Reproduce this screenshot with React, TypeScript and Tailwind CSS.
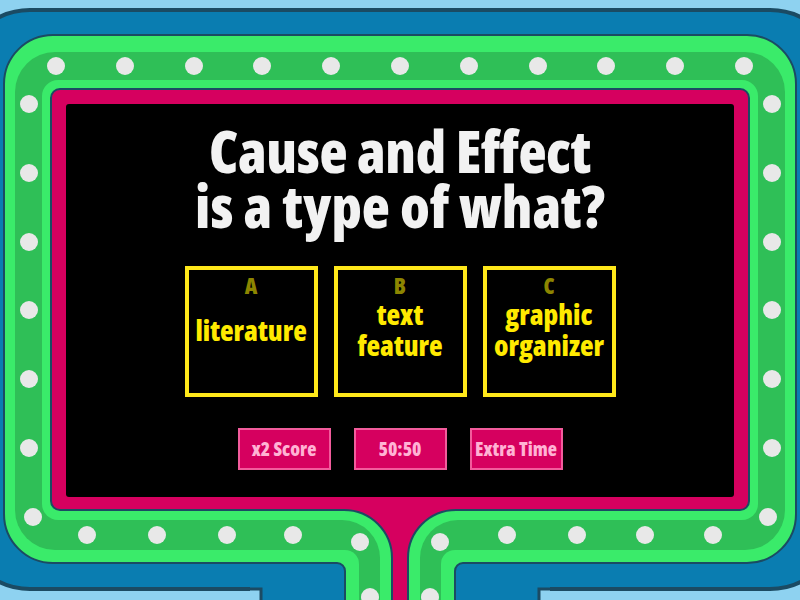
import React from 'react';

const OUTLINE = '#1b4b63';
const BLUE = '#0a7db1';
const LIGHT_GREEN = '#3aeb6a';
const DARK_GREEN = '#2fbf57';
const PINK = '#d6005f';
const DOT = '#e8e8e8';
const SKY = '#8ed2f0';

const answers = [
  { letter: 'A', lines: ['literature'] },
  { letter: 'B', lines: ['text', 'feature'] },
  { letter: 'C', lines: ['graphic', 'organizer'] },
];

const powerUps = ['x2 Score', '50:50', 'Extra Time'];

const Dot: React.FC<{ className?: string }> = ({ className = '' }) => (
  <div className={`h-[18px] w-[18px] shrink-0 rounded-full bg-[#e8e8e8] ${className}`} />
);

// the two podium legs and the pink stem under the screen
const LegJunction: React.FC = () => {
  const leg = (
    <>
      <path d="M -10 1 H 94 A 48 48 0 0 1 142 49 V 110 H -10 Z" fill={LIGHT_GREEN} stroke={OUTLINE} strokeWidth={2} />
      <path d="M -10 11 H 92 A 38 38 0 0 1 130 49 V 110 H -10 Z" fill={DARK_GREEN} />
      <path d="M -10 41 H 95 A 14 14 0 0 1 109 55 V 110 H -10 Z" fill={LIGHT_GREEN} />
      <path d="M -10 54 H 87 A 8 8 0 0 1 95 62 V 110 H -10 Z" fill={BLUE} stroke={OUTLINE} strokeWidth={2} />
      <rect x={-10} y={80} width={21} height={40} fill={SKY} stroke={OUTLINE} strokeWidth={3} />
      <circle cx={43} cy={26} r={9} fill={DOT} />
      <circle cx={110} cy={33} r={9} fill={DOT} />
      <circle cx={120} cy={88} r={9} fill={DOT} />
    </>
  );
  return (
    <svg className="absolute left-[250px] top-[509px]" width={300} height={91} viewBox="0 0 300 91">
      <rect x={0} y={-2} width={300} height={100} fill={PINK} />
      <g>{leg}</g>
      <g transform="translate(300 0) scale(-1 1)">{leg}</g>
    </svg>
  );
};

export default function App() {
  return (
    <div className="relative h-[600px] w-[800px] overflow-hidden bg-[#8ed2f0] pt-[8px] font-['Open_Sans','Liberation_Sans',sans-serif] [font-stretch:condensed]">
      <div className="-mx-[40px] h-[583px] rounded-[70px] border-4 border-[#1b4b63] bg-[#0a7db1] px-[39px] pt-[22px] pb-[23px]">
        <div className="h-full rounded-[50px] border-2 border-[#1b4b63] bg-[#3aeb6a] px-[10px] pt-[16px] pb-[12px]">
          <div className="grid h-full grid-cols-[27px_minmax(0,1fr)_27px] grid-rows-[28px_minmax(0,1fr)_30px] rounded-[40px] bg-[#2fbf57]">
            {/* top lights */}
            <div className="col-span-3 flex items-center justify-between px-[32px]">
              {Array.from({ length: 11 }).map((_, i) => (
                <Dot key={i} />
              ))}
            </div>

            {/* left lights */}
            <div className="flex flex-col items-center gap-[50.8px] pt-[15px]">
              {Array.from({ length: 7 }).map((_, i) => (
                <Dot key={i} className={i === 6 ? 'translate-x-[4px]' : ''} />
              ))}
            </div>

            {/* screen */}
            <div className="rounded-[16px] bg-[#3aeb6a] px-[8px] pt-[8px] pb-[9px]">
              <div className="h-full rounded-[10px] border-2 border-[#1b4b63] bg-[#d6005f] px-[14px] pt-[14px] pb-[12px]">
                <div className="flex h-full flex-col items-center rounded-[3px] bg-black">
                  <h1 className="mt-[19px] flex flex-col items-center text-center text-[58px] leading-[55px] font-extrabold text-[#f2f2f2]">
                    <span className="tracking-[-0.3px]">Cause and Effect</span>
                    <span>is a type of what?</span>
                  </h1>

                  <div className="mt-[33px] flex gap-[16px]">
                    {answers.map((a) => (
                      <div key={a.letter} className="flex h-[131px] w-[133px] flex-col items-center border-4 border-[#ffe81a]">
                        <span className="mt-[4px] text-[22px] leading-[22px] font-extrabold text-[#8c8500]">{a.letter}</span>
                        <div className="flex h-[68px] flex-col items-center justify-center text-center text-[28px] leading-[31px] font-extrabold text-[#ffea00]">
                          {a.lines.map((l) => (
                            <span key={l}>{l}</span>
                          ))}
                        </div>
                      </div>
                    ))}
                  </div>

                  <div className="mt-[31px] flex gap-[23px]">
                    {powerUps.map((p) => (
                      <button
                        key={p}
                        className="flex h-[42px] w-[93px] items-center justify-center whitespace-nowrap border-2 border-[#f25c9c] bg-[#d6005f] text-[19px] font-extrabold text-[#ffb3d4]"
                      >
                        {p}
                      </button>
                    ))}
                  </div>
                </div>
              </div>
            </div>

            {/* right lights */}
            <div className="flex flex-col items-center gap-[50.8px] pt-[15px]">
              {Array.from({ length: 7 }).map((_, i) => (
                <Dot key={i} className={i === 6 ? '-translate-x-[4px]' : ''} />
              ))}
            </div>

            {/* bottom lights */}
            <div className="col-span-3 flex items-center justify-between px-[63px]">
              <div className="flex gap-[52px]">
                <Dot />
                <Dot />
                <Dot />
              </div>
              <div className="flex gap-[50px]">
                <Dot />
                <Dot />
                <Dot />
              </div>
            </div>
          </div>
        </div>
      </div>

      <LegJunction />
    </div>
  );
}
